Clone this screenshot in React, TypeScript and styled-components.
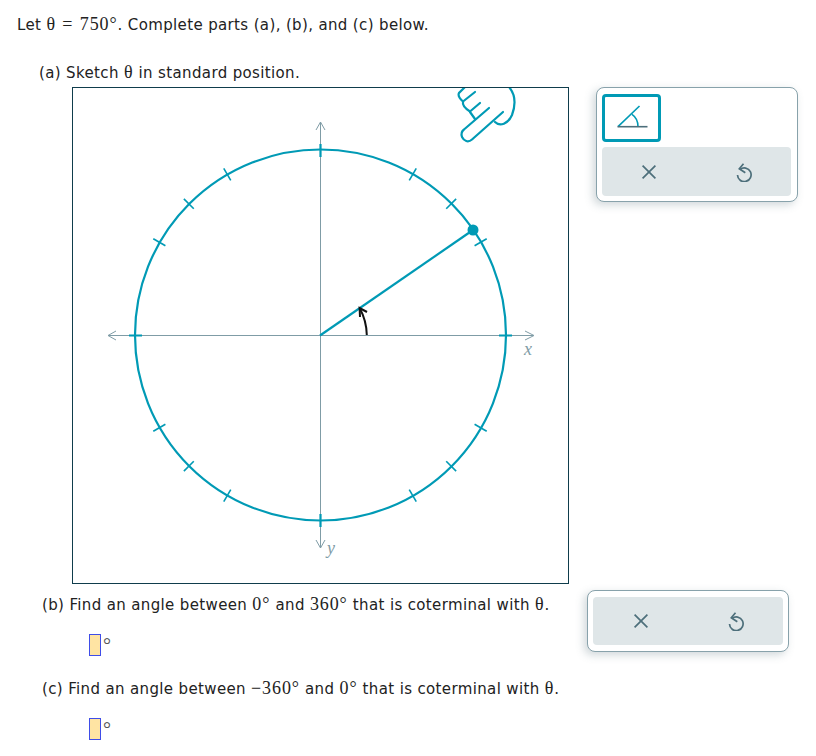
import React from "react";
import styled, { createGlobalStyle } from "styled-components";

const GlobalStyle = createGlobalStyle`
  html, body {
    margin: 0;
    padding: 0;
    background: #fff;
  }
  body {
    font-family: "DejaVu Sans", Verdana, sans-serif;
    font-size: 15px;
    letter-spacing: 0.36px;
    color: #222;
  }
`;

const TEAL = "#009ab5";
const AXIS = "#7f9ca6";
const CENTER = { x: 320, y: 335 };
const RADIUS = 185.5;
const TICK_ANGLES = [30, 45, 60, 120, 135, 150, 210, 225, 240, 300, 315, 330];

const tickLine = (deg: number) => {
  const rad = (deg * Math.PI) / 180;
  const cos = Math.cos(rad);
  const sin = Math.sin(rad);
  return {
    x1: CENTER.x + (RADIUS - 7) * cos,
    y1: CENTER.y - (RADIUS - 7) * sin,
    x2: CENTER.x + (RADIUS + 7) * cos,
    y2: CENTER.y - (RADIUS + 7) * sin,
  };
};

const CloseIcon = () => (
  <svg width="16" height="16" viewBox="0 0 16 16" fill="none" stroke="#4d6f7b" strokeWidth="1.7">
    <path d="M1.6 1.6 14.4 14.4M14.4 1.6 1.6 14.4" />
  </svg>
);

const UndoIcon = () => (
  <svg width="18" height="20" viewBox="0 0 18 20" fill="none" stroke="#4d6f7b" strokeWidth="1.7">
    <path d="M5 7.5A6.8 6.8 0 1 1 2.5 13" />
    <path d="M8.5 1.8 4.3 6.8 10.3 10.8" />
  </svg>
);

const AngleIcon = () => (
  <svg width="32" height="26" viewBox="0 0 32 26" fill="none" strokeWidth="1.6">
    <path d="M2 21.7 23.5 1" stroke={TEAL} />
    <path d="M16 9.3C20 12 22 16 22 21.7" stroke={TEAL} />
    <path d="M1.5 21.7H31.5" stroke="#4d6f7b" />
  </svg>
);

const Graph = () => (
  <GraphBox>
    <GraphSvg viewBox="73 88 495 495">
      <g stroke={AXIS} strokeWidth="1" fill="none">
        <path d="M108 335.5H533M116 331 108 335.5 116 340M525 331 534 335.5 525 340" />
        <path d="M320.5 122V548M316 130 320.5 122 325 130M316 540 320.5 548 325 540" />
      </g>
      <AxisLabel x="524" y="355">x</AxisLabel>
      <AxisLabel x="327" y="554">y</AxisLabel>
      <g stroke={TEAL} strokeWidth="2.2" fill="none">
        <circle cx={CENTER.x + 0.5} cy={CENTER.y} r={RADIUS} />
        {TICK_ANGLES.map((deg) => (
          <line key={deg} {...tickLine(deg)} strokeWidth="1.6" />
        ))}
        <path d="M129 335.5H142M499 335.5H512M320.5 144V157M320.5 514V527" />
        <path d="M320 335.5 473 230" />
      </g>
      <circle cx="473" cy="230" r="5.5" fill={TEAL} />
      <g stroke="#111" strokeWidth="2" fill="none">
        <path d="M366.8 335C366.6 326 364 316 359.6 308" />
        <path d="M360 317 359.6 308 367 312" />
      </g>
      <g stroke={TEAL} strokeWidth="2.2" fill="none" strokeLinecap="round">
        <path d="M503 112 472 139.5C468 143 464 141 462 137 461 134 462 131 464 129.5L489 108" />
        <path d="M480 103 470 111.5C466 109 462 106 463 101.5L475 92" />
        <path d="M475 119 470 112" />
        <path d="M463 101.5C459 98 458 95 459 93L465 87" />
        <path d="M509 87C515 94 516 104 512 115 508 124 500 127 495 122" />
      </g>
    </GraphSvg>
  </GraphBox>
);

const ActionBar = () => (
  <Actions>
    <ActionButton aria-label="Clear">
      <CloseIcon />
    </ActionButton>
    <ActionButton aria-label="Undo">
      <UndoIcon />
    </ActionButton>
  </Actions>
);

export default function App() {
  return (
    <Page>
      <GlobalStyle />
      <Prompt>
        Let <Formula>θ = 750°</Formula>. Complete parts (a), (b), and (c) below.
      </Prompt>
      <PartLabel>
        (a) Sketch <Formula>θ</Formula> in standard position.
      </PartLabel>
      <GraphRow>
        <Graph />
        <GraphTools>
          <AngleButton aria-label="Angle">
            <AngleIcon />
          </AngleButton>
          <ActionBar />
        </GraphTools>
      </GraphRow>
      <AnswerRow>
        <Answers>
          <Question>
            (b) Find an angle between <Formula>0°</Formula> and <Formula>360°</Formula> that is coterminal with <Formula>θ</Formula>.
          </Question>
          <AnswerLine>
            <AnswerInput />
            <Degree>°</Degree>
          </AnswerLine>
          <Question>
            (c) Find an angle between <Formula>−360°</Formula> and <Formula>0°</Formula> that is coterminal with <Formula>θ</Formula>.
          </Question>
          <AnswerLine>
            <AnswerInput />
            <Degree>°</Degree>
          </AnswerLine>
        </Answers>
        <AnswerTools>
          <ActionBar />
        </AnswerTools>
      </AnswerRow>
    </Page>
  );
}

const Page = styled.div`
  width: 816px;
  height: 756px;
  overflow: hidden;
  padding-top: 10px;
  box-sizing: border-box;
`;

const Prompt = styled.div`
  padding-left: 17px;
  height: 28px;
  line-height: 28px;
`;

const PartLabel = styled.div`
  margin-top: 20px;
  padding-left: 39px;
  height: 28px;
  line-height: 28px;
`;

const Formula = styled.span`
  font-family: "Liberation Serif", "Times New Roman", serif;
  font-size: 18px;
  letter-spacing: 0.9px;
  word-spacing: 1px;
`;

const GraphRow = styled.div`
  display: flex;
  align-items: flex-start;
  margin-top: 1px;
  padding-left: 72px;
`;

const GraphBox = styled.div`
  width: 497px;
  height: 497px;
  box-sizing: border-box;
  border: 1px solid #0f3d4c;
  overflow: hidden;
`;

const GraphSvg = styled.svg`
  display: block;
  width: 495px;
  height: 495px;
`;

const AxisLabel = styled.text`
  font-family: "Liberation Serif", serif;
  font-style: italic;
  font-size: 18px;
  fill: #7f9ca6;
`;

const ToolPanel = styled.div`
  display: flex;
  flex-direction: column;
  box-sizing: border-box;
  width: 202px;
  background: #fff;
  border: 1px solid #88a2ab;
  border-radius: 8px;
  box-shadow: -3px 3px 8px rgba(70, 100, 110, 0.25);
`;

const GraphTools = styled(ToolPanel)`
  margin-left: 27px;
  height: 115px;
  padding: 6px 6px 5px 5px;
`;

const AnswerTools = styled(ToolPanel)`
  height: 62px;
  padding: 6px 5px;
`;

const AngleButton = styled.button`
  display: flex;
  align-items: center;
  justify-content: center;
  box-sizing: border-box;
  width: 59px;
  height: 48px;
  padding: 0;
  background: #fff;
  border: 3px solid ${TEAL};
  border-radius: 4px;
  margin-bottom: 5px;
`;

const Actions = styled.div`
  display: flex;
  flex: 1;
  background: #dfe6e8;
  border-radius: 4px;
`;

const ActionButton = styled.button`
  flex: 1;
  display: flex;
  align-items: center;
  justify-content: center;
  padding: 0;
  background: transparent;
  border: 0;
`;

const AnswerRow = styled.div`
  display: flex;
  align-items: flex-start;
  margin-top: 6px;
`;

const Answers = styled.div`
  width: 587px;
  padding-left: 42px;
  box-sizing: border-box;
`;

const Question = styled.div`
  height: 28px;
  line-height: 28px;
  white-space: nowrap;
`;

const AnswerLine = styled.div`
  display: flex;
  align-items: flex-start;
  margin: 16px 0 18px 47px;
`;

const AnswerInput = styled.div`
  box-sizing: border-box;
  width: 12px;
  height: 22px;
  background: #ffe4a3;
  border: 1px solid #3f4de8;
`;

const Degree = styled.span`
  margin: 3px 0 0 2px;
  font-family: "Liberation Serif", serif;
  font-size: 20px;
  line-height: 16px;
  color: #555;
`;
